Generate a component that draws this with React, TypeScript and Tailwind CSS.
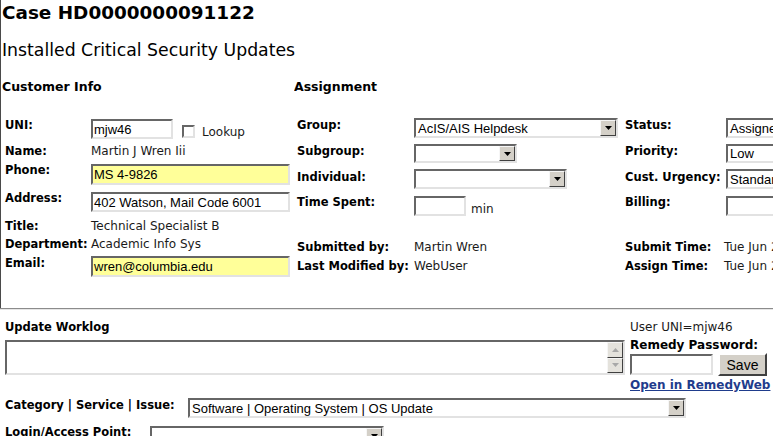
import React from 'react';

// =============================================================================
// Shared styles
// =============================================================================

const FONT_V = "font-['DejaVu_Sans',Verdana,sans-serif]";
const FONT_A = "font-['Liberation_Sans',Arial,sans-serif]";
const LABEL = `${FONT_V} text-[11.5px] font-bold leading-[14px] text-black whitespace-nowrap`;
const VALUE = `${FONT_V} text-[12px] leading-[14px] text-[#1a1a1a] whitespace-nowrap`;
const INSET =
  'border-2 border-t-[#666666] border-l-[#666666] border-b-[#e2e2e2] border-r-[#e2e2e2]';
const RAISED =
  'border border-t-[#f6f6f6] border-l-[#f6f6f6] border-b-[#404040] border-r-[#404040] bg-[#d4d0c8]';

// =============================================================================
// Form controls (Windows classic look)
// =============================================================================

function TextBox({
  className = '',
  value = '',
  yellow = false,
}: {
  className?: string;
  value?: string;
  yellow?: boolean;
}) {
  return (
    <div
      className={`${INSET} ${yellow ? 'bg-[#ffff99]' : 'bg-white'} flex shrink-0 items-center overflow-hidden whitespace-nowrap pl-[1px] ${FONT_A} text-[13px] leading-none text-black ${className}`}
    >
      {value}
    </div>
  );
}

function Arrow({ up = false, color = '#000' }: { up?: boolean; color?: string }) {
  return (
    <svg width="7" height="4" viewBox="0 0 7 4">
      <path d={up ? 'M0 4h7L3.5 0z' : 'M0 0h7L3.5 4z'} fill={color} />
    </svg>
  );
}

function Select({ className = '', value = '' }: { className?: string; value?: string }) {
  return (
    <div className={`${INSET} flex shrink-0 overflow-hidden bg-white ${className}`}>
      <div
        className={`flex flex-1 items-center overflow-hidden whitespace-nowrap pl-[2px] ${FONT_A} text-[13px] leading-none text-black`}
      >
        {value}
      </div>
      <div className={`${RAISED} flex w-[16px] shrink-0 items-center justify-center`}>
        <Arrow />
      </div>
    </div>
  );
}

function Checkbox() {
  return <div className={`${INSET} h-[13px] w-[13px] shrink-0 bg-white`} />;
}

// =============================================================================
// Sections
// =============================================================================

function CustomerInfo() {
  return (
    <div className="w-[293px] shrink-0">
      <div className={`${FONT_V} pl-[1px] text-[12.5px] font-bold leading-[16px]`}>Customer Info</div>
      <div className="mt-[22px]">
        <div className="flex h-[25px] items-start">
          <div className={`${LABEL} w-[90px] pl-[4px] pt-[1px]`}>UNI:</div>
          <TextBox className="mt-[2px] h-[20px] w-[82px]" value="mjw46" />
          <div className="ml-[9px] mt-[6px] flex items-center">
            <Checkbox />
            <span className={`${VALUE} ml-[7px] mt-[2px]`}>Lookup</span>
          </div>
        </div>
        <div className="flex h-[20px] items-start">
          <div className={`${LABEL} w-[90px] pl-[4px] pt-[2px]`}>Name:</div>
          <div className={`${VALUE} pt-[2px]`}>Martin J Wren Iii</div>
        </div>
        <div className="flex h-[28px] items-start">
          <div className={`${LABEL} w-[90px] pl-[4px] pt-[1px]`}>Phone:</div>
          <TextBox className="mt-[2px] h-[21px] w-[199px]" value="MS 4-9826" yellow />
        </div>
        <div className="flex h-[26px] items-start">
          <div className={`${LABEL} w-[90px] pl-[4px] pt-[1px]`}>Address:</div>
          <TextBox className="mt-[2px] h-[20px] w-[199px]" value="402 Watson, Mail Code 6001" />
        </div>
        <div className="flex h-[20px] items-start">
          <div className={`${LABEL} w-[90px] pl-[4px] pt-[3px]`}>Title:</div>
          <div className={`${VALUE} pt-[3px]`}>Technical Specialist B</div>
        </div>
        <div className="flex h-[18px] items-start">
          <div className={`${LABEL} w-[90px] pl-[4px] pt-[1px]`}>Department:</div>
          <div className={`${VALUE} pt-[1px]`}>Academic Info Sys</div>
        </div>
        <div className="flex h-[26px] items-start">
          <div className={`${LABEL} w-[90px] pl-[4px] pt-[2px]`}>Email:</div>
          <TextBox className="mt-[2px] h-[21px] w-[199px]" value="wren@columbia.edu" yellow />
        </div>
      </div>
    </div>
  );
}

function Assignment() {
  return (
    <div className="min-w-0 flex-1 overflow-hidden">
      <div className={`${FONT_V} text-[12.5px] font-bold leading-[16px]`}>Assignment</div>
      <div className="mt-[22px]">
        <div className="flex h-[26px] items-start">
          <div className={`${LABEL} w-[120px] shrink-0 pl-[3px] pt-[1px]`}>Group:</div>
          <div className="w-[211px] shrink-0">
            <Select className="mt-[1px] h-[20px] w-[204px]" value="AcIS/AIS Helpdesk" />
          </div>
          <div className={`${LABEL} w-[101px] shrink-0 pt-[1px]`}>Status:</div>
          <Select className="mt-[1px] h-[20px] w-[130px]" value="Assigned" />
        </div>
        <div className="flex h-[25px] items-start">
          <div className={`${LABEL} w-[120px] shrink-0 pl-[3px] pt-[1px]`}>Subgroup:</div>
          <div className="w-[211px] shrink-0">
            <Select className="mt-[1px] h-[19px] w-[103px]" />
          </div>
          <div className={`${LABEL} w-[101px] shrink-0 pt-[1px]`}>Priority:</div>
          <Select className="mt-[1px] h-[19px] w-[130px]" value="Low" />
        </div>
        <div className="flex h-[27px] items-start">
          <div className={`${LABEL} w-[120px] shrink-0 pl-[3px] pt-[2px]`}>Individual:</div>
          <div className="w-[211px] shrink-0">
            <Select className="mt-[1px] h-[20px] w-[153px]" />
          </div>
          <div className={`${LABEL} w-[101px] shrink-0 pt-[2px]`}>Cust. Urgency:</div>
          <Select className="mt-[1px] h-[20px] w-[130px]" value="Standard" />
        </div>
        <div className="flex h-[24px] items-start">
          <div className={`${LABEL} w-[120px] shrink-0 pl-[3px]`}>Time Spent:</div>
          <div className="flex w-[211px] shrink-0 items-end">
            <TextBox className="mt-[1px] h-[20px] w-[52px]" />
            <span className={`${VALUE} ml-[5px]`}>min</span>
          </div>
          <div className={`${LABEL} w-[101px] shrink-0`}>Billing:</div>
          <TextBox className="mt-[1px] h-[20px] w-[130px]" />
        </div>
        <div className="mt-[21px] flex h-[19px] items-start">
          <div className={`${LABEL} w-[120px] shrink-0 pl-[3px]`}>Submitted by:</div>
          <div className={`${VALUE} w-[211px] shrink-0`}>Martin Wren</div>
          <div className={`${LABEL} w-[99px] shrink-0`}>Submit Time:</div>
          <div className={VALUE}>Tue Jun 22 10:14:05 2004</div>
        </div>
        <div className="flex h-[14px] items-start">
          <div className={`${LABEL} w-[120px] shrink-0 pl-[3px]`}>Last Modified by:</div>
          <div className={`${VALUE} w-[211px] shrink-0`}>WebUser</div>
          <div className={`${LABEL} w-[99px] shrink-0`}>Assign Time:</div>
          <div className={VALUE}>Tue Jun 22 10:14:05 2004</div>
        </div>
      </div>
    </div>
  );
}

function ScrollButton({ up = false }: { up?: boolean }) {
  return (
    <div className={`${RAISED} flex flex-1 items-center justify-center bg-[#e4e2dc]`}>
      <Arrow up={up} color="#a8a8a8" />
    </div>
  );
}

// =============================================================================
// Page
// =============================================================================

export default function App() {
  return (
    <div className="h-[436px] w-[773px] overflow-hidden bg-white text-black">
      {/* Case header + details */}
      <div className="h-[308px] border-l border-[#4a4a4a]">
        <div className={`${FONT_V} pl-[1px] pt-[2px] text-[18.4px] font-bold leading-[22px]`}>
          Case HD0000000091122
        </div>
        <div className={`${FONT_V} mt-[16px] pl-[1px] text-[17.3px] leading-[20px]`}>
          Installed Critical Security Updates
        </div>
        <div className="mt-[19px] flex">
          <CustomerInfo />
          <Assignment />
        </div>
      </div>

      <div className="h-[2px] border-t border-b border-t-[#8c8c8c] border-b-[#e6e6e6]" />

      {/* Worklog */}
      <div className="flex">
        <div className="w-[630px] shrink-0 pl-[5px] pt-[10px]">
          <div className={LABEL}>Update Worklog</div>
          <div className={`${INSET} mt-[6px] flex h-[35px] w-[620px] justify-end bg-white`}>
            <div className="flex w-[16px] flex-col">
              <ScrollButton up />
              <ScrollButton />
            </div>
          </div>
        </div>
        <div className="pt-[10px]">
          <div className={`${VALUE} text-[11px]`}>User UNI=mjw46</div>
          <div className={`${LABEL} mt-[4px] text-[12px]`}>Remedy Password:</div>
          <div className="mt-[1px] flex items-start">
            <TextBox className="mt-[1px] h-[21px] w-[83px]" />
            <button
              type="button"
              className={`ml-[5px] h-[23px] w-[49px] border-2 border-t-white border-l-white border-b-[#404040] border-r-[#404040] bg-[#d4d0c8] ${FONT_A} text-[14px] leading-none text-black`}
            >
              Save
            </button>
          </div>
          <a
            href="#"
            className={`${FONT_V} mt-[2px] block text-[12px] font-bold leading-[14px] text-[#1f3c8c] underline`}
          >
            Open in RemedyWeb
          </a>
        </div>
      </div>

      {/* Classification */}
      <div className="mt-[6px] flex items-start pl-[5px]">
        <div className={`${LABEL} w-[183px]`}>Category | Service | Issue:</div>
        <Select className="h-[20px] w-[498px]" value="Software | Operating System | OS Update" />
      </div>
      <div className="mt-[7px] flex items-start pl-[5px]">
        <div className={`${LABEL} w-[145px]`}>Login/Access Point:</div>
        <Select className="mt-[1px] h-[20px] w-[234px]" />
      </div>
    </div>
  );
}
